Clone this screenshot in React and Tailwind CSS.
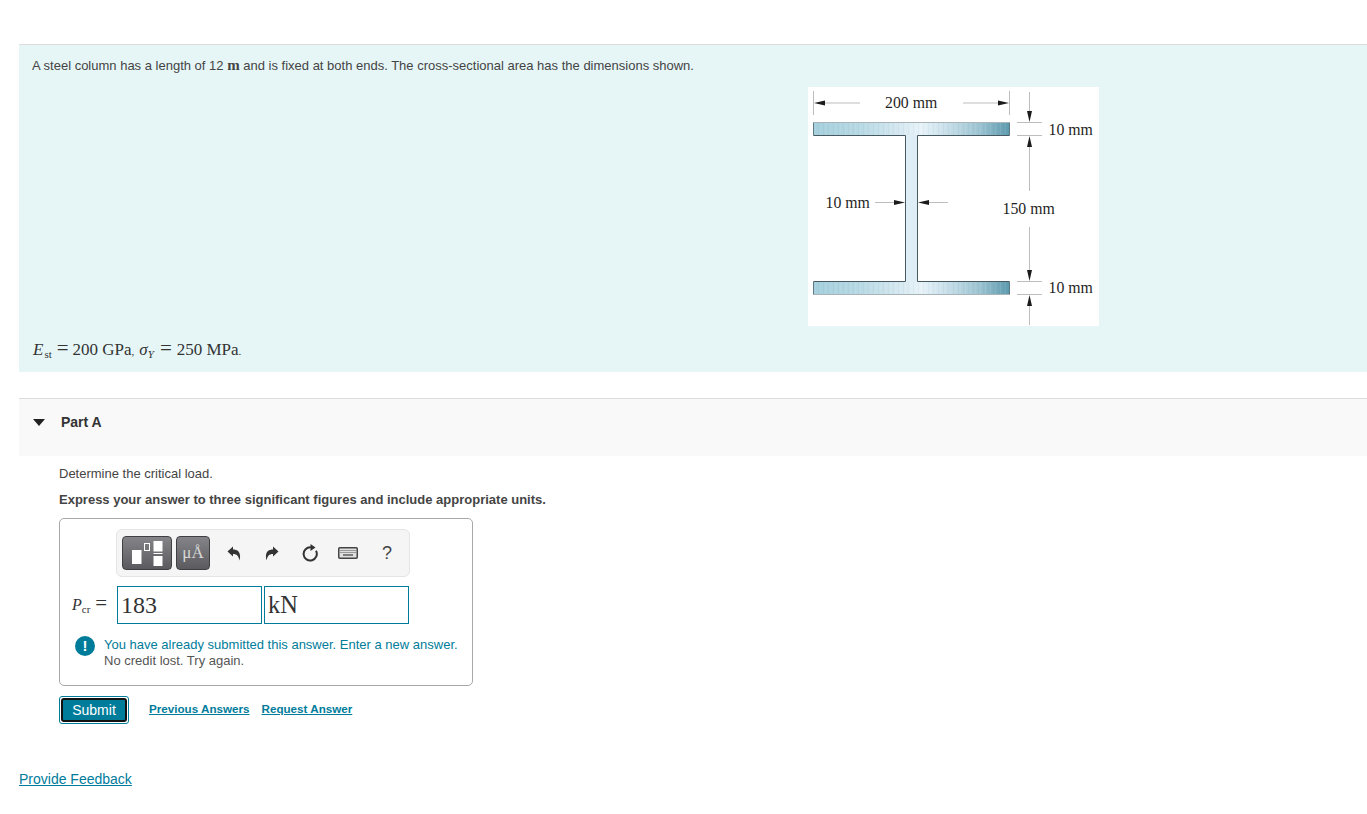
import React from 'react';

const bands = [
  ['0%', '#a5cfdc'], ['25%', '#b9dae5'], ['45%', '#d8e9f1'], ['55%', '#e8f3f9'],
  ['70%', '#c3dce7'], ['85%', '#9cc3d1'], ['100%', '#5d9aae'],
];

const SectionFigure = () => (
  <svg width="291" height="239" viewBox="808 87 291 239" className="block bg-white">
    <defs>
      <linearGradient id="flange" x1="0" x2="1" y1="0" y2="0">
        {bands.map(([o, c]) => <stop key={o} offset={o} stopColor={c} />)}
      </linearGradient>
      <pattern id="streaks" width="5" height="10" patternUnits="userSpaceOnUse">
        <rect x="0" width="1" height="10" fill="#ffffff" opacity="0.07" />
        <rect x="3" width="1" height="10" fill="#2f6f86" opacity="0.05" />
      </pattern>
    </defs>
    <g fill="none" stroke="#bdbdbd" strokeWidth="1">
      <path d="M813.5 91V115M1009.5 91V115M824 103H860M963 103H998" />
      <path d="M1029.5 92V112M1017 122.5H1042M1017 135.5H1042M1029.5 147V191" />
      <path d="M1029.5 227V271M1017 281.5H1042M1017 294.5H1042M1029.5 306V325" />
      <path d="M875 202.5H895M927 202.5H948" />
    </g>
    <path
      d="M813.5 122.5H1009.5V135.5H917.5V281.5H1009.5V294.5H813.5V281.5H905.5V135.5H813.5Z"
      fill="#dcebf5"
    />
    <rect x="813.5" y="123" width="196" height="12" fill="url(#flange)" />
    <rect x="813.5" y="123" width="196" height="12" fill="url(#streaks)" />
    <rect x="813.5" y="282" width="196" height="12" fill="url(#flange)" />
    <rect x="813.5" y="282" width="196" height="12" fill="url(#streaks)" />
    <rect x="906" y="135" width="11" height="147" fill="#dfedf6" />
    <path
      d="M813.5 135.5H905.5V281.5H813.5M1009.5 135.5H917.5V281.5H1009.5"
      fill="none"
      stroke="#465960"
      strokeWidth="1"
    />
    <path d="M813.5 122.5H1009.5M813.5 294.5H1009.5" fill="none" stroke="#a9b4b8" strokeWidth="1" />
    <path d="M813.5 122.5V135.5M1009.5 122.5V135.5M813.5 281.5V294.5M1009.5 281.5V294.5" fill="none" stroke="#5f7a84" strokeWidth="1" />
    <g fill="#1c1c1c">
      <path d="M814 103L825 100.5V105.5ZM1009 103L998 100.5V105.5Z" />
      <path d="M1029.5 122L1027 111H1032ZM1029.5 136L1027 147H1032Z" />
      <path d="M1029.5 281L1027 270H1032ZM1029.5 295L1027 306H1032Z" />
      <path d="M905 202.5L894 200V205ZM918 202.5L929 200V205Z" />
    </g>
    <g fontFamily="'Liberation Serif', serif" fontSize="15.8" fill="#1f1f1f">
      <text x="885" y="108">200 mm</text>
      <text x="1048.5" y="135">10 mm</text>
      <text x="825.5" y="208">10 mm</text>
      <text x="1002.5" y="214">150 mm</text>
      <text x="1048.5" y="293">10 mm</text>
    </g>
  </svg>
);

const TemplateIcon = () => (
  <svg width="31" height="25" viewBox="0 0 31 25">
    <rect x="0" y="9" width="9.5" height="14" fill="#fff" />
    <rect x="12.5" y="2.5" width="5" height="7" fill="none" stroke="#fff" strokeWidth="1" />
    <rect x="21.5" y="0" width="9" height="10.5" fill="#fff" />
    <rect x="21.5" y="12" width="9" height="1" fill="#fff" />
    <rect x="21.5" y="15" width="9" height="10" fill="#fff" />
  </svg>
);

const UndoIcon = ({ flip }) => (
  <svg width="14" height="15" viewBox="0 0 14 15" className={flip ? '-scale-x-100' : ''}>
    <path d="M0.5 5.5L6 0.5V3.5C11 3.5 14.5 6.5 12.5 14.5C11.5 10 10 8 6 8V10.5Z" fill="#333" />
  </svg>
);

const ResetIcon = () => (
  <svg width="16" height="18" viewBox="0 0 16 18">
    <path d="M9 3.4A6.6 6.6 0 1 0 14 6.8" fill="none" stroke="#333" strokeWidth="2" />
    <path d="M8.5 0L13.5 3.5L8.5 7Z" fill="#333" />
  </svg>
);

const KeyboardIcon = () => (
  <svg width="20" height="12" viewBox="0 0 20 12">
    <rect x="0.75" y="0.75" width="18.5" height="10.5" rx="1" fill="#e0e0e0" stroke="#444" strokeWidth="1.5" />
    <path d="M2.5 3.5H17.5M2.5 5.5H17.5" stroke="#555" strokeWidth="1" strokeDasharray="1 1" />
    <path d="M5 8H15" stroke="#555" strokeWidth="1.4" />
  </svg>
);

const Equals = ({ className }) => (
  <span className={`inline-block text-[21px] leading-[0] ${className}`}>=</span>
);

const App = () => {
  return (
    <div className="min-h-[814px] bg-white pt-[44px] pl-[19px] font-['Liberation_Sans',Arial,sans-serif] text-[#444]">
      <section className="h-[328px] border-t border-[#dcdcdc] bg-[#e6f6f7]">
        <p className="pl-[13px] pt-[13px] text-[13px] leading-[16px]">
          A steel column has a length of 12 <span className="font-['Liberation_Serif',serif] text-[15px] font-bold leading-[0]">m</span> and is fixed at both ends. The cross-sectional area has the dimensions shown.
        </p>
        <div className="ml-[789px] mt-[13px] w-[291px]">
          <SectionFigure />
        </div>
        <p className="pl-[14px] pt-[14px] font-['Liberation_Serif',serif] text-[17px] leading-[20px] text-[#333]">
          <i>E</i><sub className="ml-[1px] text-[11px]">st</sub>
          <Equals className="ml-[5px] mr-[4px]" />
          200 GPa<span className="text-[11px]">,</span>
          <i className="ml-[5px]">σ</i><sub className="text-[11px]"><i>Y</i></sub>
          <Equals className="ml-[6px] mr-[5px]" />
          250 MPa<span className="text-[11px]">.</span>
        </p>
      </section>

      <section className="mt-[26px] flex h-[58px] items-start border-t border-[#dcdcdc] bg-[#f9f9f9] pl-[14px] pt-[15px]">
        <svg width="12" height="7" viewBox="0 0 12 7" className="mt-[5px]">
          <path d="M0 0H12L6 7Z" fill="#222" />
        </svg>
        <h2 className="ml-[16px] text-[14px] font-bold leading-[16px] text-[#333]">Part A</h2>
      </section>

      <div className="pl-[40px]">
        <p className="mt-[10px] text-[13px] leading-[16px]">Determine the critical load.</p>
        <p className="mt-[10px] text-[13px] font-bold leading-[16px]">Express your answer to three significant figures and include appropriate units.</p>

        <div className="mt-[10px] h-[168px] w-[414px] rounded-[5px] border border-[#a8a8a8] bg-white pt-[10px]">
          <div className="ml-[56px] flex h-[48px] w-[294px] items-center rounded-[6px] border border-[#e4e4e4] bg-[#f5f5f5] pl-[5px]">
            <button className="flex h-[34px] w-[50px] items-center justify-center rounded-[4px] border border-[#3f3f42] bg-gradient-to-b from-[#858589] to-[#5b5b5f]">
              <TemplateIcon />
            </button>
            <button className="ml-[4px] flex h-[34px] w-[34px] items-center justify-center rounded-[4px] border border-[#3f3f42] bg-gradient-to-b from-[#858589] to-[#5b5b5f] font-['Liberation_Serif',serif] text-[17px] text-[#d8d8d8]">
              μÅ
            </button>
            <span className="ml-[17px] flex"><UndoIcon /></span>
            <span className="ml-[24px] flex"><UndoIcon flip /></span>
            <span className="ml-[23px] flex"><ResetIcon /></span>
            <span className="ml-[20px] flex"><KeyboardIcon /></span>
            <span className="ml-[24px] text-[18px] leading-[20px] text-[#444]">?</span>
          </div>

          <div className="mt-[9px] flex items-center font-['Liberation_Serif',serif] text-[#333]">
            <span className="ml-[12px] w-[45px] whitespace-nowrap text-[16px]"><i>P</i><sub className="text-[11px]">cr</sub><Equals className="ml-[5px]" /></span>
            <div className="flex h-[38px] w-[145px] items-center border border-[#007c9b] pl-[3px] text-[24px]">183</div>
            <div className="ml-[2px] flex h-[38px] w-[145px] items-center border border-[#007c9b] pl-[3px] text-[24.5px]">kN</div>
          </div>

          <div className="ml-[15px] mt-[12px] flex">
            <span className="flex h-[20px] w-[20px] items-center justify-center rounded-full bg-[#007c9b] text-[15px] font-bold text-white">!</span>
            <p className="ml-[9px] mt-[1px] text-[13px] leading-[16px] text-[#555]">
              <span className="text-[#007c9b]">You have already submitted this answer. Enter a new answer.</span>
              <br />
              No credit lost. Try again.
            </p>
          </div>
        </div>

        <div className="mt-[10px] flex items-center">
          <button className="flex h-[28px] w-[70px] items-center justify-center rounded-[3px] border border-[#007c9b] bg-white p-0">
            <span className="flex h-[24px] w-[66px] items-center justify-center rounded-[3px] border-2 border-[#111] bg-[#007c9b] text-[14px] text-white">Submit</span>
          </button>
          <a className="ml-[20px] mt-[-2px] text-[11.65px] font-bold text-[#007c9b] underline">Previous Answers</a>
          <a className="ml-[12px] mt-[-2px] text-[11.65px] font-bold text-[#007c9b] underline">Request Answer</a>
        </div>
      </div>

      <a className="mt-[47px] block text-[14px] leading-[16px] text-[#007c9b] underline">Provide Feedback</a>
    </div>
  );
};

export default App;
